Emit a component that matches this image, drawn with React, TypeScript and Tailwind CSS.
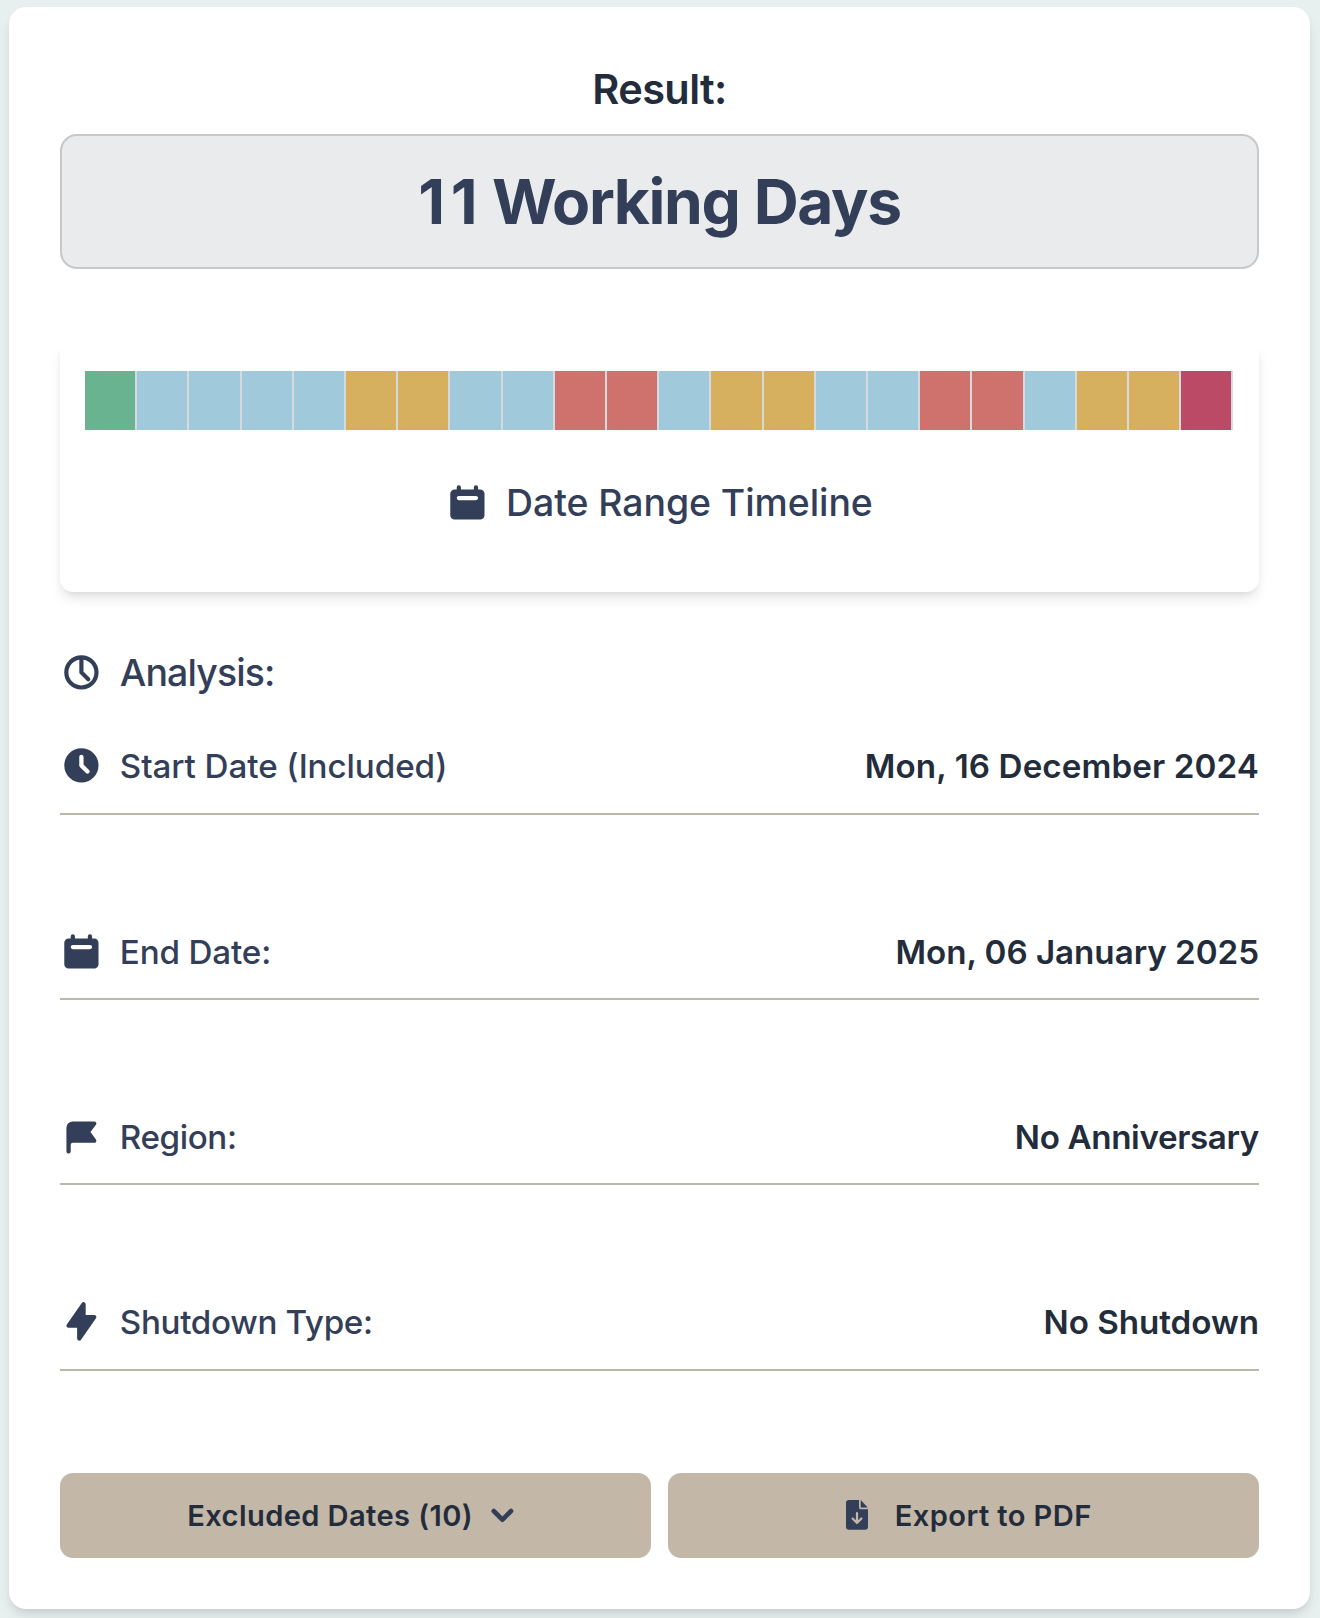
import React, { useState } from 'react';
import { HiCalendar, HiChevronDown, HiClock, HiFlag, HiLightningBolt } from 'react-icons/hi';

type DayType = 'start' | 'working' | 'weekend' | 'holiday' | 'end';

const dayColors: Record<DayType, string> = {
  start: 'bg-[#69b391]',
  working: 'bg-[#a0cadc]',
  weekend: 'bg-[#d6b05f]',
  holiday: 'bg-[#cf716d]',
  end: 'bg-[#ba4a66]'
};

// 16 Dec 2024 - 6 Jan 2025
const days: DayType[] = [
  'start', 'working', 'working', 'working', 'working', 'weekend', 'weekend',
  'working', 'working', 'holiday', 'holiday', 'working', 'weekend', 'weekend',
  'working', 'working', 'holiday', 'holiday', 'working', 'weekend', 'weekend',
  'end'
];

const ClockOutline: React.FC<{ className?: string }> = ({ className }) => (
  <svg viewBox="0 0 20 20" fill="none" stroke="currentColor" strokeWidth="1.95" className={className}>
    <circle cx="10" cy="10" r="7.05" />
    <path d="M10 3.8V10l3.2 3.2" strokeLinecap="round" strokeLinejoin="round" />
  </svg>
);

const FileDownload: React.FC<{ className?: string }> = ({ className }) => (
  <svg viewBox="0 0 22 30" className={className}>
    <path fill="currentColor" d="M3 0h10v7.4a1.9 1.9 0 001.9 1.9H22V26.7a3 3 0 01-3 3H3a3 3 0 01-3-3V3a3 3 0 013-3z" />
    <path fill="currentColor" d="M14.7 0L21.7 7.4h-7z" />
    <path d="M11 13v10M6.6 18.5L11 23l4.4-4.5" fill="none" stroke="#c3b7a8" strokeWidth="2.2" strokeLinecap="round" strokeLinejoin="round" />
  </svg>
);

interface RowProps {
  icon: React.ReactNode;
  label: string;
  value: string;
  labelClass?: string;
  valueClass?: string;
}

const Row: React.FC<RowProps> = ({ icon, label, value, labelClass = '', valueClass = '' }) => (
  <div className="flex h-[70.6px] items-start justify-between border-b-2 border-[#bab9aa] text-[33.2px] leading-[45px]">
    <div className="flex items-start gap-[17px] font-medium text-[#333e58]">
      {icon}
      <span className={labelClass}>{label}</span>
    </div>
    <span className={`font-semibold text-[#232c3b] ${valueClass}`}>{value}</span>
  </div>
);

const App: React.FC = () => {
  const [showExcluded, setShowExcluded] = useState(false);

  return (
    <div className="flex h-[1618px] w-[1320px] flex-col overflow-hidden bg-[#e8f0ef] pt-[7px] pr-[10px] pl-[9px] font-['Inter',sans-serif]">
      <div className="flex h-[1602px] flex-col rounded-[17px] bg-white px-[51px] pt-[60px] shadow-[0_8px_13px_-2px_rgba(0,0,0,0.1),0_4px_8px_-4px_rgba(0,0,0,0.1)]">
        <h2 className="text-center text-[41.5px] leading-[44px] font-semibold tracking-[-0.6px] text-[#232c3b]">Result:</h2>
        <div className="mt-[23px] flex h-[135px] shrink-0 items-center justify-center rounded-[17px] border-2 border-[#c6c8ca] bg-[#eaebed] text-[62.3px] font-bold tracking-[-1.4px] text-[#333e58]">
          <p className="[word-spacing:1px]">
            <span className="mr-[-5.5px] tracking-[5.5px]">11</span> Working Days
          </p>
        </div>

        <div className="mt-[76px] h-[247px] shrink-0 rounded-b-[13px] bg-white pt-[26px] pr-[25.5px] pl-[25px] shadow-[0_8px_13px_-2px_rgba(0,0,0,0.1),0_4px_8px_-4px_rgba(0,0,0,0.1)]">
          <div className="flex h-[59px]">
            {days.map((day, idx) => (
              <div key={idx} className={`flex-1 border-r-2 border-[#d6dade] bg-clip-padding ${dayColors[day]}`}></div>
            ))}
          </div>
          <div className="mt-[51px] flex items-center justify-center gap-[17.5px] text-[#333e58]">
            <HiCalendar className="size-[42.8px]" />
            <span className="text-[37.4px] leading-[43px] font-medium tracking-[-0.05px]">Date Range Timeline</span>
          </div>
        </div>

        <div className="mt-[59px] flex items-center gap-[17px] text-[#333e58]">
          <ClockOutline className="size-[42.8px]" />
          <span className="text-[37.4px] leading-[43px] font-medium tracking-[-0.85px]">Analysis:</span>
        </div>

        <div className="mt-[50.4px] flex flex-col gap-[114.6px]">
          <Row
            icon={<HiClock className="size-[42.8px]" />}
            label="Start Date (Included)"
            labelClass="tracking-[-0.08px]"
            value="Mon, 16 December 2024"
            valueClass="tracking-[0.1px]"
          />
          <Row
            icon={<HiCalendar className="size-[42.8px]" />}
            label="End Date:"
            labelClass="tracking-[-0.15px]"
            value="Mon, 06 January 2025"
            valueClass="tracking-[-0.05px]"
          />
          <Row
            icon={<HiFlag className="size-[42.8px]" />}
            label="Region:"
            labelClass="tracking-[-0.4px]"
            value="No Anniversary"
            valueClass="tracking-[-0.37px]"
          />
          <Row
            icon={<HiLightningBolt className="size-[42.8px]" />}
            label="Shutdown Type:"
            labelClass="tracking-[-0.32px]"
            value="No Shutdown"
            valueClass="tracking-[-0.05px]"
          />
        </div>

        <div className="mt-[102.4px] grid grid-cols-2 gap-[17px] text-[29.1px] font-semibold tracking-[0.4px] text-[#232c3b]">
          <button
            onClick={() => setShowExcluded(!showExcluded)}
            className="flex h-[85px] items-center justify-center gap-[8px] rounded-[13px] bg-[#c3b7a8]"
          >
            <span>Excluded Dates (10)</span>
            <HiChevronDown strokeWidth={0.25} className="size-[42.8px] text-[#333e58]" />
          </button>
          <button className="flex h-[85px] items-center justify-center gap-[27px] rounded-[13px] bg-[#c3b7a8] pl-[10.5px]">
            <FileDownload className="h-[30px] w-[22px] text-[#333e58]" />
            <span>Export to PDF</span>
          </button>
        </div>
      </div>
    </div>
  );
};

export default App;
